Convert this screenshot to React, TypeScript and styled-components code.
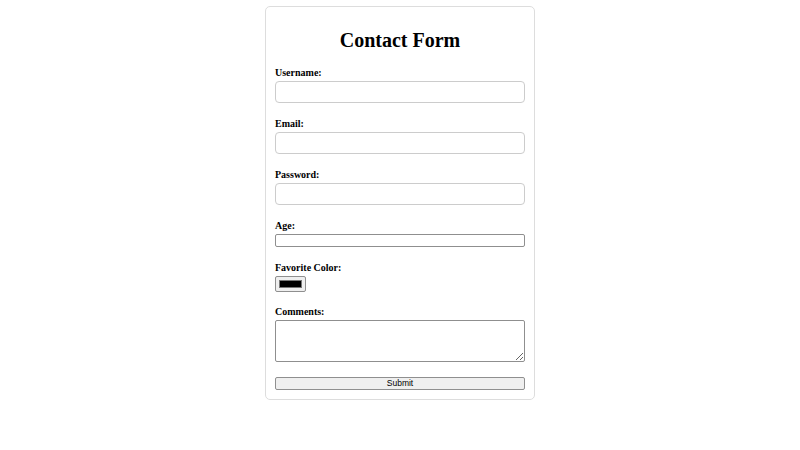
import React, { FC } from 'react';
import styled, { createGlobalStyle } from 'styled-components';

const GlobalStyle = createGlobalStyle`
  body {
    margin: 0;
    background: #ffffff;
    font-family: 'Liberation Serif', 'Times New Roman', serif;
    color: #000000;
  }
`;

const fields = [
  { id: 'username', label: 'Username:', type: 'text' },
  { id: 'email', label: 'Email:', type: 'email' },
  { id: 'password', label: 'Password:', type: 'password' },
];

const App: FC = () => {
  return (
    <>
      <GlobalStyle />
      <Card onSubmit={(e) => e.preventDefault()}>
        <Title>Contact Form</Title>
        {fields.map((item) => (
          <Group key={item.id}>
            <Label htmlFor={item.id}>{item.label}</Label>
            <TextInput id={item.id} type={item.type} />
          </Group>
        ))}
        <Group>
          <Label htmlFor="age">Age:</Label>
          <NumberInput id="age" type="number" />
        </Group>
        <Group $gap={14}>
          <Label htmlFor="color">Favorite Color:</Label>
          <ColorInput id="color">
            <Swatch />
          </ColorInput>
        </Group>
        <Group>
          <Label htmlFor="comments">Comments:</Label>
          <Comments id="comments" />
        </Group>
        <SubmitButton type="submit">Submit</SubmitButton>
      </Card>
    </>
  );
};

export default App;

const Card = styled.form`
  box-sizing: border-box;
  width: 270px;
  margin: 6px auto 0;
  padding: 0 9px 9px;
  border: 1px solid #dddddd;
  border-radius: 5px;
  display: flex;
  flex-direction: column;
`;
const Title = styled.h2`
  margin: 22px 0 15px;
  font-size: 20px;
  line-height: 23px;
  font-weight: bold;
  text-align: center;
`;
const Group = styled.div<{ $gap?: number }>`
  display: flex;
  flex-direction: column;
  align-items: flex-start;
  margin-bottom: ${({ $gap = 15 }) => $gap}px;
`;
const Label = styled.label`
  font-size: 10px;
  line-height: 11px;
  font-weight: bold;
  margin-bottom: 3px;
`;
const TextInput = styled.input`
  box-sizing: border-box;
  width: 100%;
  height: 22px;
  padding: 0 6px;
  border: 1px solid #cccccc;
  border-radius: 4px;
  outline: none;
`;
const NumberInput = styled.input`
  box-sizing: border-box;
  width: 100%;
  height: 13px;
  padding: 0 2px;
  border: 1px solid #8f8f8f;
  border-radius: 2px;
  outline: none;
`;
const ColorInput = styled.div`
  box-sizing: border-box;
  width: 31px;
  height: 16px;
  padding: 3px;
  background: #efefef;
  border: 1px solid #8f8f8f;
  border-radius: 2px;
  display: flex;
`;
const Swatch = styled.span`
  flex: 1;
  background: #000000;
  border: 1px solid #777777;
`;
const Comments = styled.textarea`
  box-sizing: border-box;
  width: 100%;
  height: 42px;
  border: 1px solid #8f8f8f;
  border-radius: 2px;
  outline: none;
`;
const SubmitButton = styled.button`
  box-sizing: border-box;
  width: 100%;
  height: 13px;
  padding: 0;
  background: #efefef;
  border: 1px solid #8f8f8f;
  border-radius: 2px;
  font-family: 'Liberation Sans', Arial, sans-serif;
  font-size: 8.5px;
  line-height: 11px;
  color: #000000;
`;
